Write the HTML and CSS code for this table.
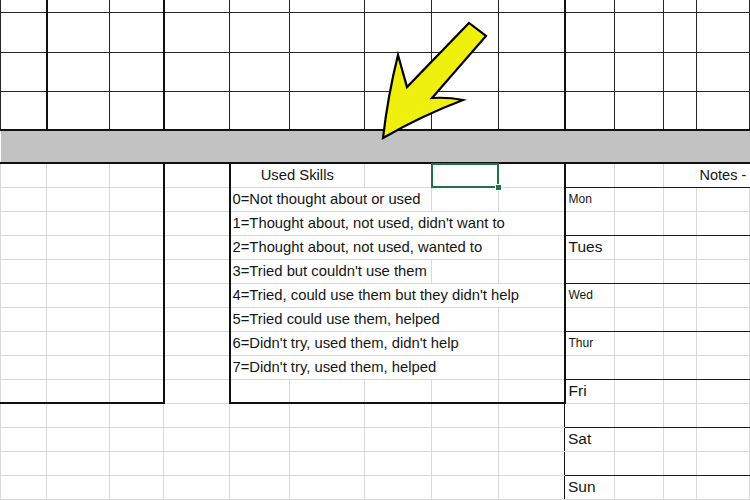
FILE: index.html
```html
<!DOCTYPE html>
<html>
<head>
<meta charset="utf-8">
<link rel="stylesheet" href="styles.css">
</head>
<body>
<div class="page">
<table class="sheet">
<colgroup>
<col class="w1"><col class="w2"><col class="w3"><col class="w4"><col class="w5"><col class="w6"><col class="w7"><col class="w8"><col class="w9"><col class="w10"><col class="w11"><col class="w12"><col class="w13"><col class="w14">
</colgroup>
<tbody class="top">
<tr class="t0"><td class="tk"></td><td></td><td class="tk"></td><td></td><td></td><td></td><td></td><td></td><td class="tk"></td><td></td><td></td><td></td><td></td><td></td></tr>
<tr class="t1"><td class="tk"></td><td></td><td class="tk"></td><td></td><td></td><td></td><td></td><td></td><td class="tk"></td><td></td><td></td><td></td><td></td><td></td></tr>
<tr class="t2"><td class="tk"></td><td></td><td class="tk"></td><td></td><td></td><td></td><td></td><td></td><td class="tk"></td><td></td><td></td><td></td><td></td><td></td></tr>
<tr class="t3"><td class="tk"></td><td></td><td class="tk"></td><td></td><td></td><td></td><td></td><td></td><td class="tk"></td><td></td><td></td><td></td><td></td><td></td></tr>
<tr class="band"><td colspan="14"></td></tr>
</tbody>
<tbody class="bot">
<tr>
<td></td><td></td><td class="tk"></td><td class="tk"></td>
<td colspan="2" class="ctr">Used Skills</td><td></td><td class="sel"><span class="selbox"></span><span class="handle"></span></td><td class="tk"></td>
<td class="db"></td><td class="db"></td><td class="db nr"></td><td colspan="2" class="db notes">Notes -</td>
</tr>
<tr>
<td></td><td></td><td class="tk"></td><td class="tk"></td>
<td colspan="3" class="tx">0=Not thought about or used</td><td></td><td class="tk"></td>
<td class="day sm">Mon</td><td></td><td></td><td></td><td></td>
</tr>
<tr>
<td></td><td></td><td class="tk"></td><td class="tk"></td>
<td colspan="5" class="tx tk">1=Thought about, not used, didn't want to</td>
<td class="db"></td><td class="db"></td><td class="db"></td><td class="db"></td><td class="db"></td>
</tr>
<tr>
<td></td><td></td><td class="tk"></td><td class="tk"></td>
<td colspan="4" class="tx">2=Thought about, not used, wanted to</td><td class="tk"></td>
<td class="day lg">Tues</td><td></td><td></td><td></td><td></td>
</tr>
<tr>
<td></td><td></td><td class="tk"></td><td class="tk"></td>
<td colspan="3" class="tx">3=Tried but couldn't use them</td><td></td><td class="tk"></td>
<td class="db"></td><td class="db"></td><td class="db"></td><td class="db"></td><td class="db"></td>
</tr>
<tr>
<td></td><td></td><td class="tk"></td><td class="tk"></td>
<td colspan="5" class="tx tk">4=Tried, could use them but they didn't help</td>
<td class="day sm">Wed</td><td></td><td></td><td></td><td></td>
</tr>
<tr>
<td></td><td></td><td class="tk"></td><td class="tk"></td>
<td colspan="4" class="tx">5=Tried could use them, helped</td><td class="tk"></td>
<td class="db"></td><td class="db"></td><td class="db"></td><td class="db"></td><td class="db"></td>
</tr>
<tr>
<td></td><td></td><td class="tk"></td><td class="tk"></td>
<td colspan="4" class="tx">6=Didn't try, used them, didn't help</td><td class="tk"></td>
<td class="day sm">Thur</td><td></td><td></td><td></td><td></td>
</tr>
<tr>
<td></td><td></td><td class="tk"></td><td class="tk"></td>
<td colspan="4" class="tx">7=Didn't try, used them, helped</td><td class="tk"></td>
<td class="db"></td><td class="db"></td><td class="db"></td><td class="db"></td><td class="db"></td>
</tr>
<tr>
<td class="bb"></td><td class="bb"></td><td class="bb tk"></td><td class="tk"></td>
<td class="bb"></td><td class="bb"></td><td class="bb"></td><td class="bb"></td><td class="bb tk"></td>
<td class="day lg">Fri</td><td></td><td></td><td></td><td></td>
</tr>
<tr>
<td></td><td></td><td></td><td></td><td></td><td></td><td></td><td></td><td class="dr"></td>
<td class="db"></td><td class="db"></td><td class="db"></td><td class="db"></td><td class="db"></td>
</tr>
<tr>
<td></td><td></td><td></td><td></td><td></td><td></td><td></td><td></td><td class="dr"></td>
<td class="day lg">Sat</td><td></td><td></td><td></td><td></td>
</tr>
<tr>
<td></td><td></td><td></td><td></td><td></td><td></td><td></td><td></td><td class="dr"></td>
<td class="db"></td><td class="db"></td><td class="db"></td><td class="db"></td><td class="db"></td>
</tr>
<tr>
<td></td><td></td><td></td><td></td><td></td><td></td><td></td><td></td><td class="dr"></td>
<td class="day lg">Sun</td><td></td><td></td><td></td><td></td>
</tr>
<tr>
<td></td><td></td><td></td><td></td><td></td><td></td><td></td><td></td><td class="dr"></td>
<td></td><td></td><td></td><td></td><td></td>
</tr>
</tbody>
</table>
<svg class="arrow" width="750" height="500" viewBox="0 0 750 500">
<path d="M383,138 Q388,95 398,55 L407,87 L469,23 L486,36 L432,98 Q448,97 463,100 Q421,116 383,138 Z" fill="#f0f00e" stroke="#000" stroke-width="2.2" stroke-linejoin="miter"/>
</svg>
</div>
</body>
</html>
```
FILE: styles.css
```css
html, body {
  margin: 0;
  padding: 0;
  background: #fff;
  overflow: hidden;
}
body {
  font-family: "Liberation Sans", Arial, sans-serif;
  color: #151515;
}
.page {
  position: relative;
  width: 750px;
  height: 500px;
  overflow: hidden;
}
.sheet {
  border-collapse: collapse;
  table-layout: fixed;
  width: 791px;
}
.w1 { width: 46px; }
.w2 { width: 63px; }
.w3 { width: 54px; }
.w4 { width: 66px; }
.w5 { width: 60px; }
.w6 { width: 75px; }
.w7 { width: 67px; }
.w8 { width: 67px; }
.w9 { width: 66px; }
.w10 { width: 50px; }
.w11 { width: 49px; }
.w12 { width: 33px; }
.w13 { width: 53px; }
.w14 { width: 41px; }

.sheet td {
  padding: 0;
  white-space: nowrap;
  overflow: hidden;
  font-size: 14.8px;
  line-height: 1;
  border: 1px solid #d9d9d9;
}

/* top grid */
.top td { border: 1px solid #262626; }
.top .t0 td { border-top: none; }
.top td.tk { border-right: 2px solid #111; }
.t0 { height: 12px; }
.t1 { height: 40px; }
.t2 { height: 39px; }
.t3 { height: 39px; }
.top .band td {
  height: 31px;
  background: #c2c2c2;
  border: none;
  border-top: 2px solid #111;
  border-bottom: 2px solid #111;
}

/* lower grid */
.bot tr { height: 24px; }
.bot td.tk { border-right: 2px solid #111; }
.bot td.bb { border-bottom: 2px solid #111; }
.bot td.dr { border-right: 1px solid #111; }
.bot td.db { border-bottom: 1px solid #1a1a1a; }
.bot td.nr { border-right: hidden; }

.sheet td.ctr { text-align: center; }
.sheet td.tx { padding-left: 2px; }
.sheet td.notes { padding-left: 3px; font-size: 14.5px; }
.sheet td.day { padding-left: 3px; }
.sheet td.sm { font-size: 12px; }
.sheet td.lg { font-size: 15.5px; }

.sheet td.sel {
  position: relative;
  overflow: visible;
}
.selbox {
  position: absolute;
  left: -1px;
  top: -1px;
  right: -1px;
  bottom: -1px;
  border: 2px solid #217346;
  z-index: 1;
}
.handle {
  position: absolute;
  right: -4px;
  bottom: -4px;
  width: 5px;
  height: 5px;
  background: #217346;
  border: 1px solid #fff;
  z-index: 2;
}

.arrow {
  position: absolute;
  left: 0;
  top: 0;
}
```
